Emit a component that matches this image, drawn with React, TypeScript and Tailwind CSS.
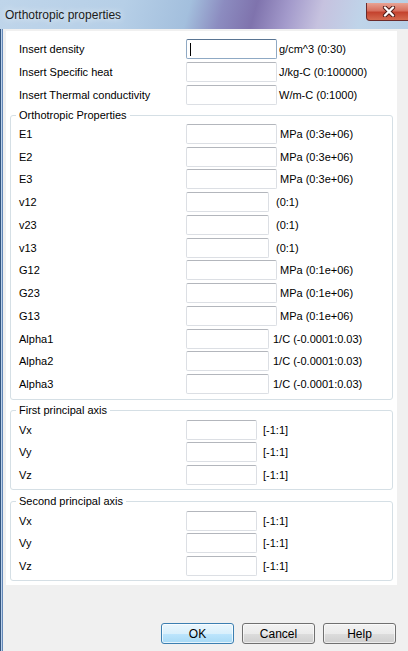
import type { ReactNode } from "react";

type Row = {
  label: string;
  unit: string;
  w: string;
  gap: string;
  mb: string;
};

const font = "font-['Liberation_Sans',Arial,sans-serif]";

const topRows: Row[] = [
  { label: "Insert density", unit: "g/cm^3 (0:30)", w: "w-[91px]", gap: "ml-[2px]", mb: "mb-[3px]" },
  { label: "Insert Specific heat", unit: "J/kg-C (0:100000)", w: "w-[91px]", gap: "ml-[2px]", mb: "mb-[3px]" },
  { label: "Insert Thermal conductivity", unit: "W/m-C (0:1000)", w: "w-[91px]", gap: "ml-[2px]", mb: "mb-0" },
];

const orthoRows: Row[] = [
  { label: "E1", unit: "MPa (0:3e+06)", w: "w-[91px]", gap: "ml-[3px]", mb: "mb-[3px]" },
  { label: "E2", unit: "MPa (0:3e+06)", w: "w-[91px]", gap: "ml-[3px]", mb: "mb-[2px]" },
  { label: "E3", unit: "MPa (0:3e+06)", w: "w-[91px]", gap: "ml-[3px]", mb: "mb-[3px]" },
  { label: "v12", unit: "(0:1)", w: "w-[83px]", gap: "ml-[7px]", mb: "mb-[3px]" },
  { label: "v23", unit: "(0:1)", w: "w-[83px]", gap: "ml-[7px]", mb: "mb-[3px]" },
  { label: "v13", unit: "(0:1)", w: "w-[83px]", gap: "ml-[7px]", mb: "mb-[2px]" },
  { label: "G12", unit: "MPa (0:1e+06)", w: "w-[91px]", gap: "ml-[3px]", mb: "mb-[3px]" },
  { label: "G23", unit: "MPa (0:1e+06)", w: "w-[91px]", gap: "ml-[3px]", mb: "mb-[3px]" },
  { label: "G13", unit: "MPa (0:1e+06)", w: "w-[91px]", gap: "ml-[3px]", mb: "mb-[3px]" },
  { label: "Alpha1", unit: "1/C (-0.0001:0.03)", w: "w-[83px]", gap: "ml-[4px]", mb: "mb-[2px]" },
  { label: "Alpha2", unit: "1/C (-0.0001:0.03)", w: "w-[83px]", gap: "ml-[4px]", mb: "mb-[3px]" },
  { label: "Alpha3", unit: "1/C (-0.0001:0.03)", w: "w-[83px]", gap: "ml-[4px]", mb: "mb-0" },
];

const axisRows: Row[] = [
  { label: "Vx", unit: "[-1:1]", w: "w-[71px]", gap: "ml-[6px]", mb: "mb-[2px]" },
  { label: "Vy", unit: "[-1:1]", w: "w-[71px]", gap: "ml-[6px]", mb: "mb-[3px]" },
  { label: "Vz", unit: "[-1:1]", w: "w-[71px]", gap: "ml-[6px]", mb: "mb-0" },
];

function Field({ row, focused, labelW }: { row: Row; focused?: boolean; labelW: string }) {
  return (
    <div className={`flex items-center h-[20px] ${row.mb}`}>
      <div className={`${labelW} shrink-0 text-[11px] leading-[13px] text-black`}>{row.label}</div>
      <div
        className={`relative h-[20px] ${row.w} shrink-0 rounded-[2px] bg-white border ${
          focused ? "border-[#8fa9c4] border-t-[#5a7593]" : "border-[#dcdfe4] border-t-[#b3b6bc]"
        }`}
      >
        {focused && <span className="absolute left-[3px] top-[3px] w-px h-[13px] bg-black" />}
      </div>
      <div className={`${row.gap} text-[11px] leading-[13px] text-black whitespace-nowrap`}>{row.unit}</div>
    </div>
  );
}

function Group({ title, children, cls }: { title: string; children: ReactNode; cls: string }) {
  return (
    <fieldset className={`mx-[4px] border border-[#d5dfe5] rounded-[3px] pl-[8px] pr-[8px] ${cls}`}>
      <legend className="-ml-[3px] px-[3px] text-[11px] leading-[13px] text-black">{title}</legend>
      {children}
    </fieldset>
  );
}

function Btn({ label, def }: { label: string; def?: boolean }) {
  return (
    <button
      type="button"
      className={`w-[73px] h-[21px] rounded-[3px] border text-[12px] leading-[14px] text-black ${
        def
          ? "border-[#3c7fb1] bg-[linear-gradient(#eaf6fd_0%,#d9f0fc_50%,#bee6fd_50%,#a7d9f5_100%)] shadow-[inset_0_0_0_1px_rgba(255,255,255,0.7)]"
          : "border-[#707070] bg-[linear-gradient(#f2f2f2_0%,#ebebeb_50%,#dddddd_50%,#cfcfcf_100%)] shadow-[inset_0_0_0_1px_rgba(255,255,255,0.6)]"
      }`}
    >
      {label}
    </button>
  );
}

export default function App() {
  return (
    <div className={`relative w-[408px] h-[651px] overflow-hidden flex flex-col bg-[#f0f0f0] ${font}`}>
      {/* glass title bar */}
      <div className="h-[29px] shrink-0 flex bg-[linear-gradient(105deg,#bfd5ea_0%,#b6cfe7_30%,#a3bfdd_46%,#8c8cc0_54%,#7f73ad_62%,#a39acb_70%,#c6c2df_78%,#bfd4e9_88%,#b7cfe6_100%)]">
        <div className="pl-[5px] pt-[8px] text-[12px] leading-[15px] text-[#1b1b1b] [text-shadow:0_0_7px_rgba(255,255,255,0.95)]">
          Orthotropic properties
        </div>
        <div className="ml-auto -mr-[4px] mt-[3px] w-[46px] h-[18px] rounded-b-[4px] border border-[#6b2a2a] border-t-0 bg-[linear-gradient(#e8a394_0%,#d7705f_45%,#c4432f_55%,#d56a4f_100%)] flex items-center justify-center">
          <svg width="14" height="11" viewBox="0 0 14 11">
            <path d="M3 1.5 L11 9.5 M11 1.5 L3 9.5" stroke="#4a1a16" strokeWidth="4.2" strokeLinecap="round" />
            <path d="M3 1.5 L11 9.5 M11 1.5 L3 9.5" stroke="#ffffff" strokeWidth="2.4" strokeLinecap="round" />
          </svg>
        </div>
      </div>

      <div className="flex flex-1">
        {/* left window frame */}
        <div className="w-[3px] shrink-0 bg-[linear-gradient(to_right,#34557f_0%,#34557f_33%,#b9d0ea_33%,#b9d0ea_66%,#6488b8_66%)]" />

        <div className="flex-1 flex flex-col">
          <div className="ml-[3px] mt-[2px] w-[391px] bg-white pt-[8px] pb-[4px]">
            <div className="pl-[13px]">
              {topRows.map((r, i) => (
                <Field key={r.label} row={r} focused={i === 0} labelW="w-[167px]" />
              ))}
            </div>

            <Group title="Orthotropic Properties" cls="mt-[4px] pt-[2px] pb-[5px]">
              {orthoRows.map((r) => (
                <Field key={r.label} row={r} labelW="w-[167px]" />
              ))}
            </Group>

            <Group title="First principal axis" cls="mt-[4px] pt-[3px] pb-[4px]">
              {axisRows.map((r) => (
                <Field key={r.label} row={r} labelW="w-[167px]" />
              ))}
            </Group>

            <Group title="Second principal axis" cls="mt-[5px] pt-[3px] pb-[4px]">
              {axisRows.map((r) => (
                <Field key={r.label} row={r} labelW="w-[167px]" />
              ))}
            </Group>
          </div>

          <div className="mt-[38px] flex justify-end gap-[8px] pr-[12px]">
            <Btn label="OK" def />
            <Btn label="Cancel" />
            <Btn label="Help" />
          </div>
        </div>
      </div>
    </div>
  );
}
